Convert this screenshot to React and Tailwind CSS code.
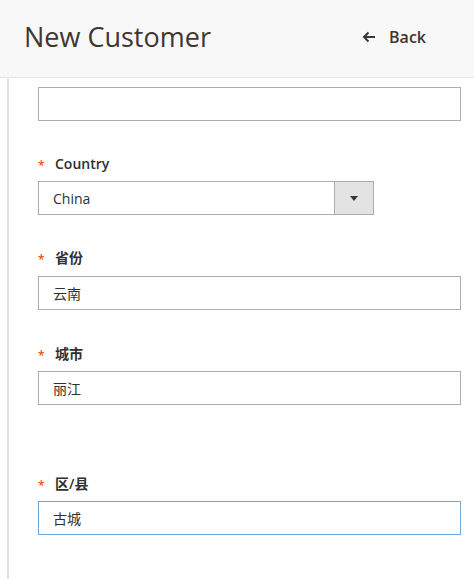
import React from "react";

const font = { fontFamily: '"Open Sans", "Noto Sans CJK SC", sans-serif' };

const Label = ({ children, className }) => (
  <div className={`flex h-[20px] items-center text-[14px] font-semibold text-[#303030] ${className || ""}`}>
    <span className="w-[17px] pt-[5px] text-[12px] leading-none text-[#eb5202]">*</span>
    <span>{children}</span>
  </div>
);

const TextBox = ({ value, focused }) => (
  <input
    readOnly
    defaultValue={value}
    className={`block h-[34px] w-full rounded-none border bg-white px-[14px] text-[14px] text-[#303030] outline-none ${
      focused ? "border-[#6ea8de]" : "border-[#adadad]"
    }`}
    style={font}
  />
);

export default function App() {
  return (
    <div className="h-[579px] w-[474px] overflow-hidden bg-white" style={font}>
      <header className="flex h-[78px] items-center justify-between border-b border-[#e6e6e6] bg-[#f8f8f8] pb-[3px] pl-[24px] pr-[48px]">
        <h1 className="text-[27px] font-normal text-[#41362f]">New Customer</h1>
        <button className="flex items-center gap-[13px] text-[16px] font-semibold text-[#41362f]">
          <svg width="14" height="12" viewBox="0 0 14 12" fill="none" stroke="#41362f" strokeWidth="2">
            <path d="M13 6H2M6.5 1.5 2 6l4.5 4.5" />
          </svg>
          Back
        </button>
      </header>
      <div className="pl-[7px]">
        <div className="h-[501px] border-l-2 border-[#e3e3e3] pl-[29px] pr-[13px] pt-[9px]">
          <TextBox value="" />

          <Label className="mt-[32px]">Country</Label>
          <div className="mt-[8px] flex h-[34px] w-[336px] border border-[#adadad] bg-white">
            <div className="flex flex-1 items-center px-[14px] text-[14px] text-[#303030]">China</div>
            <div className="flex w-[39px] items-center justify-center border-l border-[#adadad] bg-[#e3e3e3]">
              <svg width="8" height="5" viewBox="0 0 8 5">
                <path d="M0 0h8L4 5z" fill="#41362f" />
              </svg>
            </div>
          </div>

          <Label className="mt-[32px]">省份</Label>
          <div className="mt-[9px]">
            <TextBox value="云南" />
          </div>

          <Label className="mt-[33px]">城市</Label>
          <div className="mt-[8px]">
            <TextBox value="丽江" />
          </div>

          <Label className="mt-[68px]">区/县</Label>
          <div className="mt-[8px]">
            <TextBox value="古城" focused />
          </div>
        </div>
      </div>
    </div>
  );
}
